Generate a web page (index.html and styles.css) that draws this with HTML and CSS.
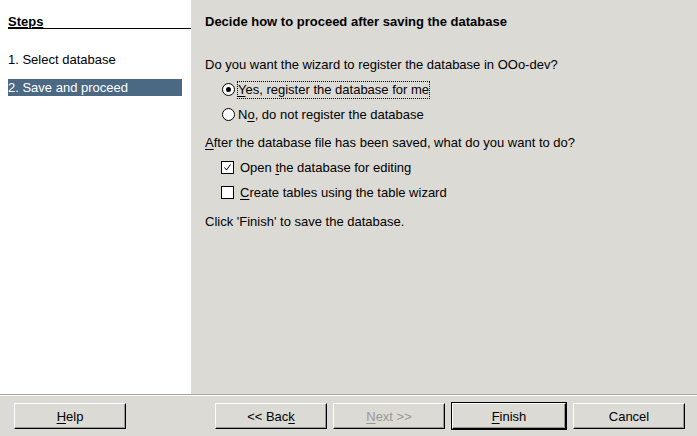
FILE: index.html
```html
<!DOCTYPE html>
<html>
<head>
<meta charset="utf-8">
<link rel="stylesheet" href="styles.css">
</head>
<body>
<div class="dialog">
  <div class="main">
    <div class="sidebar">
      <div class="steps-title"><span>Steps</span></div>
      <div class="step first">1. Select database</div>
      <div class="step current">2. Save and proceed</div>
    </div>
    <div class="content">
      <div class="row title">Decide how to proceed after saving the database</div>
      <div class="row question first-q">Do you want the wizard to register the database in OOo-dev?</div>
      <div class="row option radio-opt">
        <span class="radio checked"></span>
        <span class="label focus"><u>Y</u>es, register the database for me</span>
      </div>
      <div class="row option radio-opt">
        <span class="radio"></span>
        <span class="label">N<u>o</u>, do not register the database</span>
      </div>
      <div class="row question gap"><span><u>A</u>fter the database file has been saved, what do you want to do?</span></div>
      <div class="row option">
        <span class="check checked"><svg width="9" height="9" viewBox="0 0 9 9"><path d="M1.5 4.5 L3.5 7 L7.5 1.5" fill="none" stroke="#000" stroke-width="1"/></svg></span>
        <span class="label">Open <u>t</u>he database for editing</span>
      </div>
      <div class="row option">
        <span class="check"></span>
        <span class="label"><u>C</u>reate tables using the table wizard</span>
      </div>
      <div class="row note gap">Click 'Finish' to save the database.</div>
    </div>
  </div>
  <div class="footer">
    <button class="btn help"><u>H</u>elp</button>
    <div class="nav">
      <button class="btn">&lt;&lt; Bac<u>k</u></button>
      <button class="btn disabled"><u>N</u>ext &gt;&gt;</button>
      <button class="btn default"><u>F</u>inish</button>
      <button class="btn">Cancel</button>
    </div>
  </div>
</div>
</body>
</html>
```

FILE: styles.css
```css
* { box-sizing: border-box; }
html, body { margin: 0; padding: 0; }
body {
  width: 697px;
  height: 436px;
  background: #dcdad5;
  font-family: "Liberation Sans", Arial, sans-serif;
  font-size: 13px;
  color: #000;
  overflow: hidden;
}
u { text-decoration: underline; text-underline-offset: 2px; }
.dialog { display: flex; flex-direction: column; height: 436px; }
.main { display: flex; height: 394px; }
.sidebar {
  width: 191px;
  background: #fff;
  display: flex;
  flex-direction: column;
}
.steps-title {
  font-weight: bold;
  font-size: 13px;
  padding-top: 14px;
  margin-left: 8px;
  height: 29px;
  border-bottom: 1px solid #000;
  line-height: 15px;
}
.steps-title span { text-decoration: underline; text-underline-offset: 1px; }
.step {
  margin: 0 9px 0 8px;
  height: 17px;
  line-height: 17px;
}
.step.first { margin-top: 22px; }
.step.current { background: #4b6983; color: #fff; margin-top: 11px; }
.content {
  flex: 1;
  padding: 9px 0 0 14px;
  display: flex;
  flex-direction: column;
}
.row { height: 25px; display: flex; align-items: center; line-height: 16px; }
.question { height: 24px; }
.title { font-weight: bold; font-size: 13px; }
.first-q { margin-top: 19px; }
.gap { margin-top: 4px; }
.option { padding-left: 16px; }
.radio-opt { padding-left: 17px; }
.radio {
  width: 13px; height: 13px; border-radius: 50%;
  border: 1px solid #000; background: #fff; margin-right: 3px;
  display: flex; align-items: center; justify-content: center;
  flex: none;
}
.radio.checked::after { content: ""; width: 5px; height: 5px; border-radius: 50%; background: #000; }
.check {
  width: 13px; height: 13px; border: 1px solid #000; background: #fff;
  margin-right: 6px; display: flex; align-items: center; justify-content: center;
  flex: none;
}
.label.focus { outline: 1px dotted #000; outline-offset: 0; }
.footer {
  flex: 1;
  border-top: 1px solid #a8a6a1;
  box-shadow: inset 0 1px 0 #fff;
  display: flex;
  align-items: flex-start;
  padding: 8px 12px 0 14px;
}
.nav { display: flex; gap: 6px; margin-left: auto; }
.btn {
  width: 112px; height: 26px;
  font-family: inherit; font-size: 13px; color: #000;
  background: #dcdad5;
  border: 1px solid;
  border-color: #fff #000 #000 #fff;
  box-shadow: inset -1px -1px 0 #9a9893;
  padding: 0;
}
.btn.default { width: 114px; outline: 1px solid #000; border-color: #fff #000 #000 #fff; }
.btn.disabled { color: #9a9893; }
.nav .btn.default { margin: 0 1px; }
```
